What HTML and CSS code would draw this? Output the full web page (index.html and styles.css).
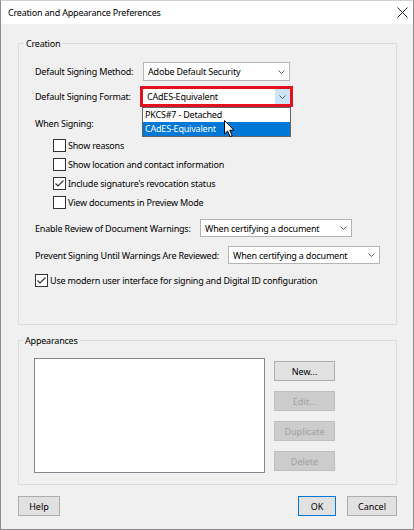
FILE: index.html
```html
<!DOCTYPE html>
<html lang="en">
<head>
    <meta charset="UTF-8">
    <meta name="viewport" content="width=device-width, initial-scale=1.0">
    <title>Creation and Appearance Preferences</title>
    <link rel="stylesheet" href="styles.css">
</head>
<body>
    <div class="window">
        <div class="titlebar">
            <span>Creation and Appearance Preferences</span>
            <svg class="close" width="11" height="11" viewBox="0 0 11 11">
                <path d="M0.5 0.5 L10.5 10.5 M10.5 0.5 L0.5 10.5" stroke="#222" stroke-width="1" fill="none"/>
            </svg>
        </div>

        <div class="content">
            <fieldset class="group creation">
                <legend>Creation</legend>

                <div class="row">
                    <span class="field-label method-label">Default Signing Method:</span>
                    <div class="select">
                        <span class="value">Adobe Default Security</span>
                        <span class="arrow"><svg width="7" height="4" viewBox="0 0 7 4"><path d="M0.5 0.5 L3.5 3.5 L6.5 0.5" stroke="#606060" fill="none"/></svg></span>
                    </div>
                </div>

                <div class="row format-row">
                    <span class="field-label format-label">Default Signing Format:</span>
                    <div class="highlight">
                        <div class="select focused">
                            <span class="value">CAdES-Equivalent</span>
                            <span class="arrow"><svg width="7" height="4" viewBox="0 0 7 4"><path d="M0.5 0.5 L3.5 3.5 L6.5 0.5" stroke="#606060" fill="none"/></svg></span>
                        </div>
                        <ul class="dropdown">
                            <li>PKCS#7 - Detached</li>
                            <li class="selected">CAdES-Equivalent</li>
                        </ul>
                        <svg class="cursor" width="12" height="18" viewBox="0 0 12 18">
                            <path d="M0.5 0.5 L0.5 14 L3.6 11 L6 16.6 L8.2 15.6 L5.8 10.2 L10 10.2 Z" fill="#fff" stroke="#000" stroke-width="1"/>
                        </svg>
                    </div>
                </div>

                <div class="subhead">When Signing:</div>

                <div class="checks">
                    <label class="check"><span class="box"></span>Show reasons</label>
                    <label class="check"><span class="box"></span>Show location and contact information</label>
                    <label class="check"><span class="box"><svg width="11" height="11" viewBox="0 0 11 11"><path d="M1.5 5.5 L4 8 L9.5 2.5" stroke="#333" stroke-width="1.2" fill="none"/></svg></span>Include signature's revocation status</label>
                    <label class="check"><span class="box"></span>View documents in Preview Mode</label>
                </div>

                <div class="row warn-row">
                    <span class="field-label enable-label">Enable Review of Document Warnings:</span>
                    <div class="select wide">
                        <span class="value">When certifying a document</span>
                        <span class="arrow"><svg width="7" height="4" viewBox="0 0 7 4"><path d="M0.5 0.5 L3.5 3.5 L6.5 0.5" stroke="#606060" fill="none"/></svg></span>
                    </div>
                </div>

                <div class="row warn-row next">
                    <span class="field-label prevent-label">Prevent Signing Until Warnings Are Reviewed:</span>
                    <div class="select wide">
                        <span class="value">When certifying a document</span>
                        <span class="arrow"><svg width="7" height="4" viewBox="0 0 7 4"><path d="M0.5 0.5 L3.5 3.5 L6.5 0.5" stroke="#606060" fill="none"/></svg></span>
                    </div>
                </div>

                <label class="check modern"><span class="box"><svg width="11" height="11" viewBox="0 0 11 11"><path d="M1.5 5.5 L4 8 L9.5 2.5" stroke="#333" stroke-width="1.2" fill="none"/></svg></span>Use modern user interface for signing and Digital ID configuration</label>
            </fieldset>

            <fieldset class="group appearances">
                <legend>Appearances</legend>
                <div class="app-body">
                    <div class="listbox"></div>
                    <div class="side-buttons">
                        <button class="btn side">New...</button>
                        <button class="btn side" disabled>Edit...</button>
                        <button class="btn side" disabled>Duplicate</button>
                        <button class="btn side" disabled>Delete</button>
                    </div>
                </div>
            </fieldset>

            <div class="footer">
                <button class="btn help">Help</button>
                <div class="spacer"></div>
                <button class="btn ok">OK</button>
                <button class="btn cancel">Cancel</button>
            </div>
        </div>
    </div>
</body>
</html>
```

FILE: styles.css
```css
body {
    margin: 0;
    font-family: "Noto Sans", "Open Sans", sans-serif;
    font-size: 9px;
    letter-spacing: -0.2px;
    color: #000;
    background: #fff;
    white-space: nowrap;
}

.window {
    width: 414px;
    height: 530px;
    box-sizing: border-box;
    border: 1px solid #8c8c8c;
    border-top-color: #d0d0d0;
    background-color: #f0f0f0;
}

.titlebar {
    height: 23px;
    background: #fff;
    display: flex;
    align-items: center;
    justify-content: space-between;
    padding: 0 5px 0 7px;
}

.content {
    padding: 12px 16px 0 17px;
}

/* group boxes */
.group {
    margin: 0;
    border: 1px solid #dcdcdc;
    padding: 0 15px 0 16px;
}

.group legend {
    padding: 0 2px;
    margin-left: -11px;
    line-height: 15px;
}

.creation {
    padding-top: 11px;
    padding-bottom: 37px;
}

.row {
    display: flex;
    align-items: center;
}

.field-label {
    flex-shrink: 0;
}

.method-label { width: 108px; }
.format-label { width: 105px; }
.enable-label { width: 165px; }
.prevent-label { width: 193px; }

.format-row {
    margin-top: 5px;
}

.select {
    width: 147px;
    height: 19px;
    box-sizing: border-box;
    border: 1px solid #b4b4b4;
    background: #fff;
    display: flex;
    align-items: center;
}

.select .value {
    flex: 1;
    padding-left: 4px;
}

.select .arrow {
    width: 15px;
    align-self: stretch;
    display: flex;
    align-items: center;
    justify-content: center;
}

.select.wide {
    width: 152px;
    height: 18px;
}

.highlight {
    position: relative;
    border: 3px solid #e3101e;
}

.select.focused {
    height: 15px;
    border: none;
}

.select.focused .arrow {
    background: #cce4f7;
}

.dropdown {
    position: absolute;
    left: -1px;
    top: 18px;
    width: 149px;
    box-sizing: border-box;
    margin: 0;
    padding: 0;
    list-style: none;
    background: #fff;
    border: 1px solid #646464;
    z-index: 2;
}

.dropdown li {
    height: 14px;
    line-height: 14px;
    padding-left: 2px;
}

.dropdown .selected {
    background: #0078d7;
    color: #fff;
}

.cursor {
    position: absolute;
    left: 81px;
    top: 31px;
    z-index: 3;
}

.subhead {
    margin-top: 9px;
    line-height: 15px;
}

.checks {
    margin-top: 8px;
    padding-left: 18px;
    display: flex;
    flex-direction: column;
    gap: 6px;
}

.check {
    display: flex;
    align-items: center;
    height: 13px;
    gap: 2px;
}

.box {
    width: 13px;
    height: 13px;
    box-sizing: border-box;
    border: 1px solid #333;
    background: #fff;
    display: flex;
    align-items: center;
    justify-content: center;
    flex-shrink: 0;
}

.warn-row {
    margin-top: 10px;
}

.warn-row.next {
    margin-top: 9px;
}

.check.modern {
    margin-top: 10px;
}

/* appearances */
.appearances {
    margin-top: 8px;
    padding: 10px 15px 11px 15px;
}

.app-body {
    display: flex;
    align-items: flex-start;
}

.listbox {
    width: 231px;
    height: 115px;
    box-sizing: border-box;
    border: 1px solid #828790;
    background: #fff;
}

.side-buttons {
    margin-left: 9px;
    margin-top: 3px;
    display: flex;
    flex-direction: column;
    gap: 10px;
}

.btn {
    font: inherit;
    height: 20px;
    box-sizing: border-box;
    border: 1px solid #adadad;
    background: #e1e1e1;
    color: #000;
    padding: 0;
}

.btn.side {
    width: 61px;
}

.btn:disabled {
    background: #cccccc;
    border-color: #bfbfbf;
    color: #a0a0a0;
}

.footer {
    display: flex;
    margin-top: 11px;
    gap: 11px;
}

.spacer {
    flex: 1;
}

.help { width: 42px; }
.ok { width: 38px; border-color: #0078d7; }
.cancel { width: 50px; }
```
